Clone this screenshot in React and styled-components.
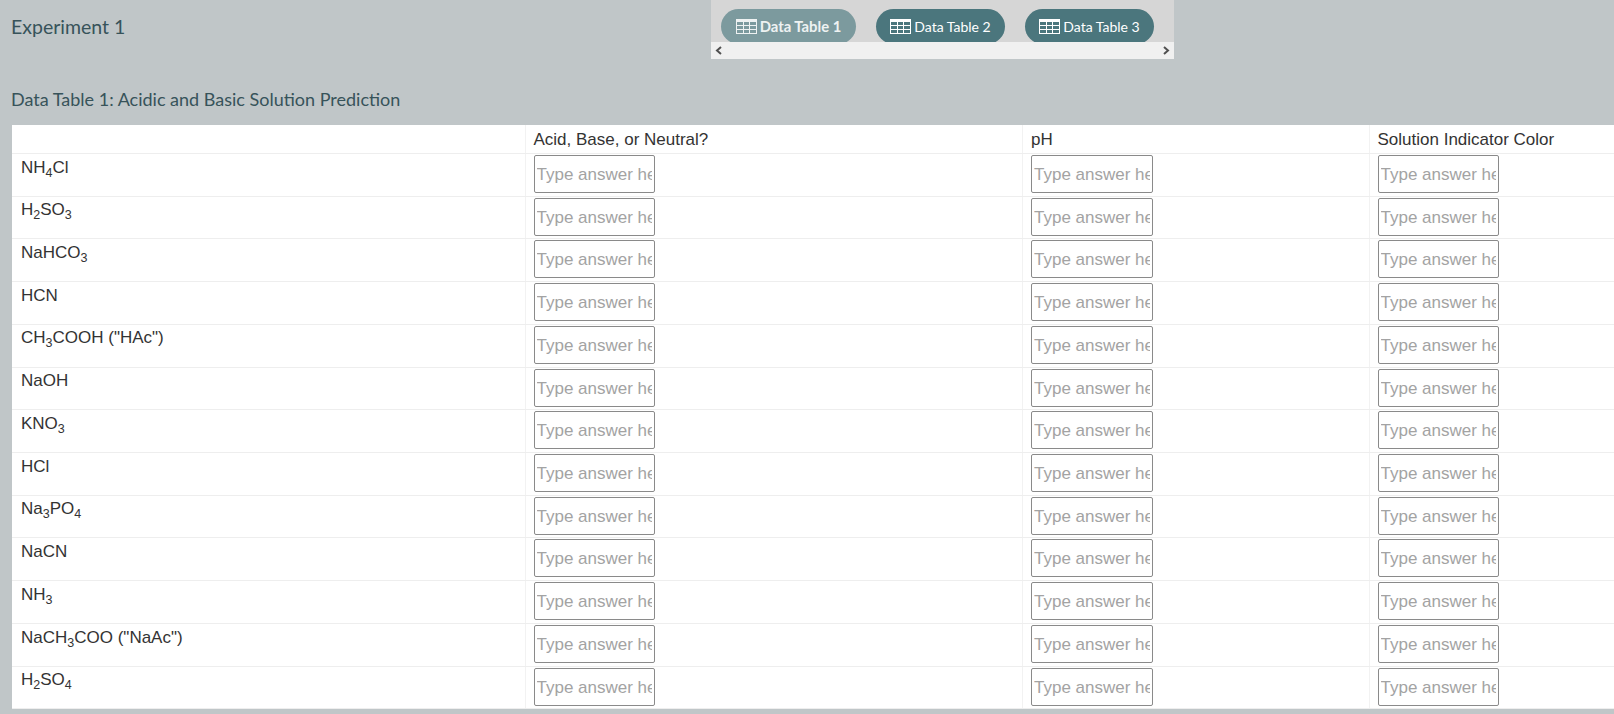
import React from "react";
import styled, { createGlobalStyle } from "styled-components";

const rows = [
  ["NH", <sub key="a">4</sub>, "Cl"],
  ["H", <sub key="a">2</sub>, "SO", <sub key="b">3</sub>],
  ["NaHCO", <sub key="a">3</sub>],
  ["HCN"],
  ["CH", <sub key="a">3</sub>, 'COOH ("HAc")'],
  ["NaOH"],
  ["KNO", <sub key="a">3</sub>],
  ["HCl"],
  ["Na", <sub key="a">3</sub>, "PO", <sub key="b">4</sub>],
  ["NaCN"],
  ["NH", <sub key="a">3</sub>],
  ["NaCH", <sub key="a">3</sub>, 'COO ("NaAc")'],
  ["H", <sub key="a">2</sub>, "SO", <sub key="b">4</sub>],
];

const tabs = ["Data Table 1", "Data Table 2", "Data Table 3"];

const TableIcon = () => (
  <svg width="21" height="15" viewBox="0 0 21 15" fill="none" stroke="currentColor" strokeWidth="1" shapeRendering="crispEdges">
    <rect x="0.5" y="0.5" width="20" height="14" />
    <path d="M0.5 1.5H20.5M0.5 2.5H20.5M0.5 6.5H20.5M0.5 10.5H20.5M7.5 2.5V14.5M13.5 2.5V14.5" />
  </svg>
);

const Chevron = ({ flip }) => (
  <svg width="8" height="9" viewBox="0 0 8 9" fill="none" stroke="#505050" strokeWidth="2">
    <path d={flip ? "M2 1l4 3.5L2 8" : "M6 1L2 4.5 6 8"} />
  </svg>
);

const App = () => (
  <Page>
    <GlobalStyle />
    <TopBar>
      <Heading>Experiment 1</Heading>
      <TabStrip>
        <TabRow>
          {tabs.map((tab, idx) => (
            <Tab key={tab} active={idx === 0}>
              <TableIcon />
              {tab}
            </Tab>
          ))}
        </TabRow>
        <ScrollTrack>
          <Chevron />
          <Chevron flip />
        </ScrollTrack>
      </TabStrip>
    </TopBar>
    <SubHeading>Data Table 1: Acidic and Basic Solution Prediction</SubHeading>
    <DataTable>
      <colgroup>
        <col width="513" />
        <col width="497.5" />
        <col width="346.5" />
        <col width="340" />
      </colgroup>
      <thead>
        <tr>
          <HeadCell />
          <HeadCell>Acid, Base, or Neutral?</HeadCell>
          <HeadCell>pH</HeadCell>
          <HeadCell>Solution Indicator Color</HeadCell>
        </tr>
      </thead>
      <tbody>
        {rows.map((name, idx) => (
          <tr key={idx}>
            <NameCell>{name}</NameCell>
            {[0, 1, 2].map((col) => (
              <InputCell key={col}>
                <Answer placeholder="Type answer here" />
              </InputCell>
            ))}
          </tr>
        ))}
      </tbody>
    </DataTable>
  </Page>
);

const GlobalStyle = createGlobalStyle`
  html, body {
    margin: 0;
    height: 100%;
    overflow: hidden;
    background: #c0c6c8;
  }
`;

const Page = styled.div`
  width: 1614px;
  height: 714px;
  overflow: hidden;
  padding-left: 11px;
  box-sizing: border-box;
  font-family: "Liberation Sans", Arial, sans-serif;
`;

const TopBar = styled.div`
  display: flex;
  align-items: flex-start;
  height: 59px;
`;

const Heading = styled.h2`
  width: 700px;
  margin: 14px 0 0 0;
  font-family: Lato, sans-serif;
  font-size: 19.5px;
  line-height: 25px;
  font-weight: 400;
  color: #37535a;
`;

const TabStrip = styled.div`
  width: 463px;
  height: 59px;
  background: #d6d6d6;
  overflow: hidden;
`;

const TabRow = styled.div`
  display: flex;
  gap: 20px;
  height: 42px;
  padding: 9px 0 0 10px;
  box-sizing: border-box;
  overflow: hidden;
`;

const Tab = styled.div`
  display: flex;
  align-items: center;
  justify-content: center;
  gap: 3px;
  flex: none;
  width: ${({ active }) => (active ? "135px" : "129px")};
  height: 35px;
  padding-bottom: 1px;
  box-sizing: border-box;
  border-radius: 18px;
  background: ${({ active }) => (active ? "#7c9a9e" : "#4b767d")};
  color: ${({ active }) => (active ? "#eef2f2" : "#ffffff")};
  font-family: Lato, sans-serif;
  font-size: ${({ active }) => (active ? "14.8px" : "14px")};
  font-weight: ${({ active }) => (active ? 700 : 400)};
`;

const ScrollTrack = styled.div`
  display: flex;
  justify-content: space-between;
  align-items: center;
  height: 17px;
  padding: 0 4px;
  background: #f0f0f0;
`;

const SubHeading = styled.h3`
  margin: 29px 0 0 0;
  height: 37px;
  font-family: Lato, sans-serif;
  font-size: 18px;
  line-height: 22px;
  font-weight: 400;
  color: #37535a;
`;

const DataTable = styled.table`
  margin-left: 1px;
  width: 1697px;
  table-layout: fixed;
  border-collapse: collapse;
  background: #fff;
  color: #333;
  font-size: 17px;
`;

const HeadCell = styled.th`
  height: 28px;
  padding: 1px 8px 0;
  box-sizing: border-box;
  border-left: 1px solid #f2f2f2;
  border-bottom: 1px solid #eeeeee;
  text-align: left;
  font-weight: 400;
  line-height: 27px;
  &:first-child {
    border-left: none;
  }
`;

const NameCell = styled.td`
  height: 42.72px;
  padding: 3.6px 8px 0 9px;
  box-sizing: border-box;
  vertical-align: top;
  border-bottom: 1px solid #eeeeee;
  line-height: 20px;
  sub {
    font-size: 12.5px;
    line-height: 0;
  }
`;

const InputCell = styled.td`
  height: 42.72px;
  padding: 1px 8px 0;
  box-sizing: border-box;
  vertical-align: top;
  border-left: 1px solid #f2f2f2;
  border-bottom: 1px solid #eeeeee;
`;

const Answer = styled.input`
  display: block;
  width: 121.5px;
  height: 38px;
  padding: 2px 2px 0;
  box-sizing: border-box;
  border: 1px solid #8a8a8a;
  border-radius: 2px;
  background: #fff;
  font-family: "Liberation Sans", Arial, sans-serif;
  font-size: 17px;
  outline: none;
  &::placeholder {
    color: #a3a3a3;
    opacity: 1;
  }
`;

export default App;
